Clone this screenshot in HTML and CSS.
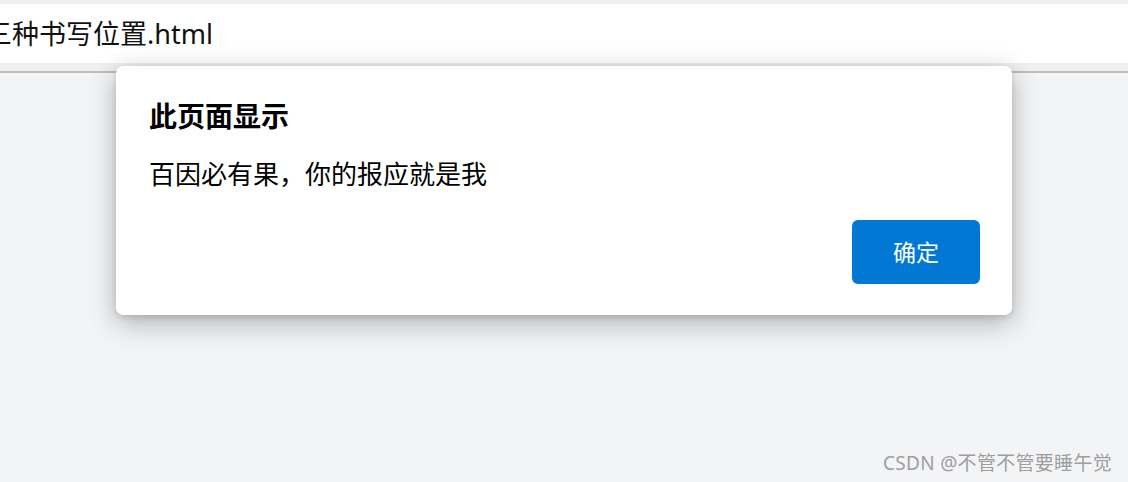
FILE: index.html
```html
<!DOCTYPE html>
<html lang="zh-CN">
<head>
<meta charset="utf-8">
<title>三种书写位置.html</title>
<link rel="stylesheet" href="styles.css">
</head>
<body>
  <div class="top-strip"></div>
  <div class="address-bar"><span class="address-text">三种书写位置.html</span></div>
  <div class="bar-band"></div>
  <main class="page">
    <div class="watermark">CSDN @不管不管要睡午觉</div>
  </main>
  <div class="dialog" role="dialog">
    <h1 class="dialog-title">此页面显示</h1>
    <p class="dialog-message">百因必有果，你的报应就是我</p>
    <div class="dialog-actions">
      <button class="btn-ok" type="button">确定</button>
    </div>
  </div>
</body>
</html>
```
FILE: styles.css
```css
html, body {
  margin: 0;
  padding: 0;
}
body {
  width: 1128px;
  height: 482px;
  overflow: hidden;
  display: flex;
  flex-direction: column;
  background: #f3f4f6;
  font-family: "Noto Sans", "Noto Sans CJK SC", sans-serif;
  color: #000;
}
.top-strip {
  height: 4px;
  background: #efefef;
  flex: none;
}
.address-bar {
  height: 59px;
  flex: none;
  background: #ffffff;
  display: flex;
  align-items: center;
  overflow: hidden;
}
.address-text {
  margin-left: -15px;
  font-size: 27px;
  line-height: 36px;
  color: #111;
  white-space: nowrap;
}
.bar-band {
  height: 8px;
  flex: none;
  background: #f0f0f0;
  border-bottom: 2px solid #bdbdbd;
}
.page {
  flex: 1;
  display: flex;
  flex-direction: column;
  justify-content: flex-end;
  align-items: flex-end;
  padding: 0 16px 6px 0;
}
.watermark {
  font-size: 19px;
  line-height: 26px;
  color: #9e9e9e;
  letter-spacing: 0.3px;
}
.dialog {
  position: absolute;
  top: 66px;
  left: 116px;
  width: 896px;
  box-sizing: border-box;
  padding: 32px 32px 31px 32px;
  background: #ffffff;
  border-radius: 7px;
  box-shadow: 0 8px 28px rgba(0, 0, 0, 0.28), 0 2px 6px rgba(0, 0, 0, 0.12);
}
.dialog-title {
  margin: 0;
  font-size: 28px;
  line-height: 36px;
  font-weight: 700;
  padding-left: 1px;
}
.dialog-message {
  margin: 22px 0 0 0;
  font-size: 26px;
  line-height: 36px;
  font-weight: 400;
  padding-left: 1px;
}
.dialog-actions {
  margin-top: 28px;
  display: flex;
  justify-content: flex-end;
}
.btn-ok {
  width: 128px;
  height: 64px;
  border: none;
  border-radius: 6px;
  background: #0078d4;
  color: #ffffff;
  font-family: "Noto Sans", "Noto Sans CJK SC", sans-serif;
  font-size: 23px;
  line-height: 30px;
  padding: 0;
}
```
